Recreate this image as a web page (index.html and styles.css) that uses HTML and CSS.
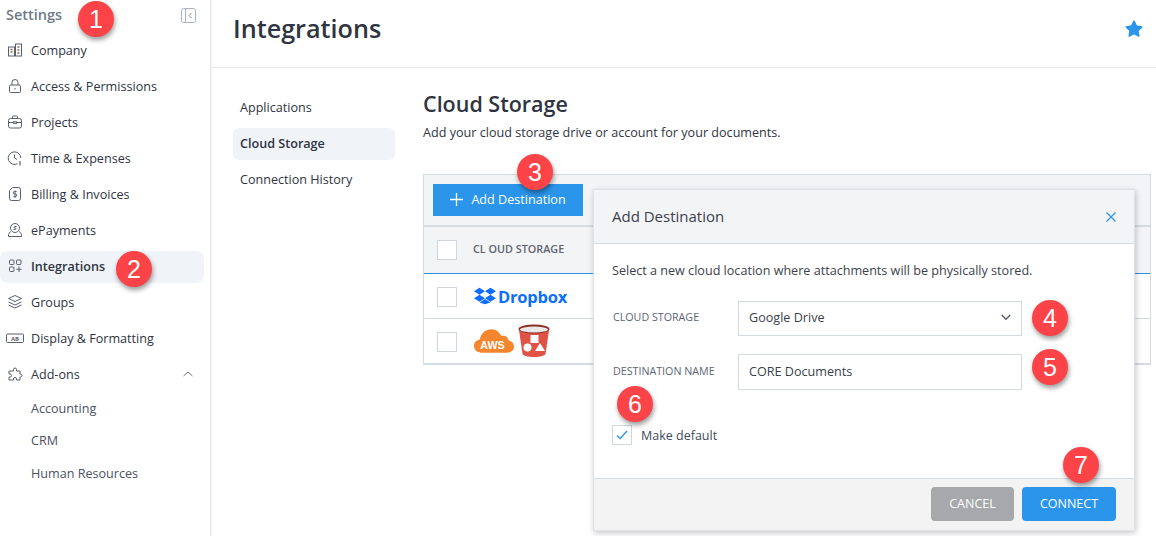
FILE: index.html
```html
<!DOCTYPE html>
<html lang="en">
<head>
<meta charset="utf-8">
<title>Integrations</title>
<link rel="stylesheet" href="styles.css">
</head>
<body>
<div class="app">
  <aside class="sidebar">
    <div class="side-head">
      <span class="side-title">Settings</span>
      <svg class="collapse" width="15" height="15" viewBox="0 0 15 15" fill="none" stroke="#a9b3c2" stroke-width="1"><rect x=".5" y=".5" width="14" height="14" rx="2"/><path d="M4.500 .5v14"/><path d="M10.500 5L8 7.500l2.500 2.500" stroke="#7d8899"/></svg>
    </div>
    <nav class="side-nav">
      <a class="nav-item"><svg class="ico" viewBox="0 0 16 16" fill="none" stroke="#5a5f6e"><rect x="1.500" y="5" width="6" height="9"/><rect x="8.500" y="2" width="6" height="12"/><path d="M3.500 7.500h2M3.500 10h2M10.500 5h2M10.500 8h2M10.500 11h2" stroke="#8a6d3b" stroke-width="1.400"/></svg><span>Company</span></a>
      <a class="nav-item"><svg class="ico" viewBox="0 0 16 16" fill="none" stroke="#5a5f6e"><rect x="2.500" y="7" width="11" height="7.500" rx="1.200"/><path d="M5 7V4.500a3 3 0 0 1 6 0V7"/><path d="M8 10v1.500"/></svg><span>Access &amp; Permissions</span></a>
      <a class="nav-item"><svg class="ico" viewBox="0 0 16 16" fill="none" stroke="#5a5f6e"><rect x="1.500" y="4.500" width="13" height="9.500" rx="2"/><path d="M5.500 4.500V3a1 1 0 0 1 1-1h3a1 1 0 0 1 1 1v1.500M1.500 8.500h4.500M10 8.500h4.500"/><rect x="6.500" y="7.800" width="3" height="1.600"/></svg><span>Projects</span></a>
      <a class="nav-item"><svg class="ico" viewBox="0 0 16 16" fill="none" stroke="#5a5f6e"><path d="M10.500 13.700A6.300 6.300 0 1 1 13.800 8"/><path d="M7.500 4.500V8l2.500 1.500"/><path d="M13 11v4.500" stroke-width="1.200"/></svg><span>Time &amp; Expenses</span></a>
      <a class="nav-item"><svg class="ico" viewBox="0 0 16 16" fill="none" stroke="#5a5f6e"><path d="M5.500 1.500h6a2 2 0 0 1 2 2v9a2 2 0 0 1-2 2h-7a2 2 0 0 1-2-2V4.500z"/><path d="M9.500 5.500H7.500a1 1 0 0 0 0 2.500h1a1 1 0 0 1 0 2.500H6.500M8 4.500v7.500"/></svg><span>Billing &amp; Invoices</span></a>
      <a class="nav-item"><svg class="ico" viewBox="0 0 16 16" fill="none" stroke="#5a5f6e"><circle cx="8" cy="6" r="4.500"/><path d="M9.500 4.500H7.500a.8.800 0 0 0 0 1.500h1a.8.800 0 0 1 0 1.500H6.500"/><path d="M3.500 9.500L1.500 12.500v2h13v-2l-2-3"/></svg><span>ePayments</span></a>
      <a class="nav-item active"><svg class="ico" viewBox="0 0 16 16" fill="none" stroke="#5a5f6e"><rect x="2.500" y="2" width="4.500" height="4.500" rx="1"/><rect x="9.500" y="2" width="4.500" height="4.500" rx="1"/><rect x="2.500" y="9" width="4.500" height="4.500" rx="1"/><path d="M12 8.500v5.500M9.300 11.300h5.400"/></svg><span>Integrations</span></a>
      <a class="nav-item"><svg class="ico" viewBox="0 0 16 16" fill="none" stroke="#5a5f6e"><path d="M8 1.500l6.500 3L8 7.500l-6.500-3z"/><path d="M1.500 8L8 11l6.500-3M1.500 11L8 14l6.500-3"/></svg><span>Groups</span></a>
      <a class="nav-item"><svg class="ico ico-wide" viewBox="0 0 18 12" fill="none" stroke="#5a5f6e"><rect x=".5" y="2" width="17" height="8.500" rx="1"/><text x="9" y="8.500" class="ab">AB</text></svg><span>Display &amp; Formatting</span></a>
      <a class="nav-item"><svg class="ico" viewBox="0 0 16 16" fill="none" stroke="#5a5f6e"><path d="M5 5h1.500V3.500a1.500 1.500 0 0 1 3 0V5H13v3h.5a1.500 1.500 0 0 1 0 3H13v3H9.500v-1a1.500 1.500 0 0 0-3 0v1H2v-3h1a1.500 1.500 0 0 0 0-3H2V5z"/></svg><span>Add-ons</span><svg class="chev-up" width="12" height="8" viewBox="0 0 12 8" fill="none" stroke="#6b7280"><path d="M1.500 6L6 2l4.500 4"/></svg></a>
      <a class="sub-item first">Accounting</a>
      <a class="sub-item">CRM</a>
      <a class="sub-item">Human Resources</a>
    </nav>
  </aside>

  <main class="main">
    <header class="top">
      <h1>Integrations</h1>
      <svg class="star" width="18" height="18" viewBox="0 0 18 18"><path d="M9 1.200l2.400 4.900 5.400.8-3.900 3.800.9 5.400L9 13.600l-4.800 2.500.9-5.400L1.200 6.900l5.400-.8z" fill="#2b95eb" stroke="#2b95eb" stroke-width="1.500" stroke-linejoin="round"/></svg>
    </header>
    <div class="body">
      <nav class="subnav">
        <a class="subnav-item">Applications</a>
        <a class="subnav-item current">Cloud Storage</a>
        <a class="subnav-item">Connection History</a>
      </nav>
      <section class="content">
        <h2>Cloud Storage</h2>
        <p class="lead">Add your cloud storage drive or account for your documents.</p>
        <div class="table">
          <div class="toolbar">
            <button class="add-btn"><svg width="13" height="13" viewBox="0 0 13 13" stroke="#fff" stroke-width="1.300"><path d="M6.500 0v13M0 6.500h13"/></svg>Add Destination</button>
          </div>
          <div class="row head"><span class="check"></span><span class="th">CL OUD STORAGE</span></div>
          <div class="row r1"><span class="check"></span>
            <span class="dropbox"><svg width="22" height="18" viewBox="0 0 25 19" fill="#0d6efd"><path d="M6.300 0L0 4l6.300 4 6.200-4zM18.700 0l-6.200 4 6.200 4L25 4zM0 12l6.300 4 6.200-4-6.200-4zM18.700 8l-6.200 4 6.200 4 6.300-4zM6.300 17l6.200 2 6.200-2-6.200-4z"/></svg><b>Dropbox</b></span>
          </div>
          <div class="row r2"><span class="check"></span>
            <span class="logos">
              <svg width="40" height="27" viewBox="0 0 41 27"><path d="M8 26C3 26 0 23 0 19c0-4 3-6 6-6.500C7 6 12 2 18 2c5 0 8 3 10 7 1-.5 3-.5 4 0 2 1 3 2.500 3.500 4.500C38.500 14 41 16.500 41 20c0 3.500-3 6-7 6z" fill="#f5862e"/><text x="19" y="22" class="aws">AWS</text></svg>
              <svg width="32" height="33" viewBox="0 0 32 33"><path d="M1 6l3.500 24c.2 1.500 5 3 11.500 3s11.300-1.500 11.500-3L31 6z" fill="#e05243"/><ellipse cx="16" cy="5" rx="15.500" ry="4.500" fill="#8c3123"/><ellipse cx="16" cy="5.500" rx="14" ry="3" fill="#e8e8e8"/><rect x="12.500" y="11" width="8" height="8" fill="#fff"/><circle cx="9.500" cy="23.500" r="4" fill="#fff"/><path d="M22 19l5 8H17z" fill="#fff"/></svg>
            </span>
          </div>
        </div>
      </section>
    </div>
  </main>
</div>

<div class="modal">
  <div class="modal-head"><span class="modal-title">Add Destination</span><svg width="10" height="10" viewBox="0 0 10 10" stroke="#2b95eb" stroke-width="1.200"><path d="M.5 .5l9 9M9.500 .5l-9 9"/></svg></div>
  <div class="modal-body">
    <p class="hint">Select a new cloud location where attachments will be physically stored.</p>
    <div class="field"><label class="lab-a">CLOUD STORAGE</label><div class="input">Google Drive<svg width="10" height="7" viewBox="0 0 10 7" fill="none" stroke="#555c68" stroke-width="1.400"><path d="M.8 1L5 5.200 9.200 1"/></svg></div></div>
    <div class="field second"><label class="lab-b">DESTINATION NAME</label><div class="input">CORE Documents</div></div>
    <div class="default"><span class="check small"><svg width="12" height="10" viewBox="0 0 12 10" fill="none" stroke="#2b95eb" stroke-width="1.400"><path d="M1 5.500L4.200 8.500 11 1"/></svg></span>Make default</div>
  </div>
  <div class="modal-foot"><button class="btn cancel">CANCEL</button><button class="btn connect">CONNECT</button></div>
</div>

<span class="badge b1">1</span>
<span class="badge b2">2</span>
<span class="badge b3">3</span>
<span class="badge b4">4</span>
<span class="badge b5">5</span>
<span class="badge b6">6</span>
<span class="badge b7">7</span>
</body>
</html>
```
FILE: styles.css
```css
* { box-sizing: border-box; }
html, body { margin: 0; height: 536px; overflow: hidden; }
body { position: relative; background: #fff; font-family: "Open Sans", sans-serif; color: #2f3442; font-size: 12.600px; }
.app { display: flex; height: 536px; }

.sidebar { width: 211px; flex: none; border-right: 1px solid #e6e8ec; box-shadow: 1px 0 2px #eef0f3; padding-right: 6px; }
.side-head { height: 35px; display: flex; align-items: flex-start; justify-content: space-between; padding: 5px 8px 0 6px; }
.side-title { font-size: 14.500px; font-weight: 600; color: #6d7a8a; line-height: 20px; }
.collapse { margin-top: 3px; }
.side-nav { display: flex; flex-direction: column; }
.nav-item { height: 32px; margin-bottom: 4px; display: flex; align-items: center; padding: 0 10px 2px 7px; border-radius: 8px; color: #2f3442; }
.nav-item.active { background: #f0f3f8; font-weight: 600; }
.ico { width: 16px; height: 16px; flex: none; margin-right: 8px; stroke-width: 1; }
.ico-wide { width: 18px; height: 12px; margin-left: -1px; margin-right: 7px; }
.ab { font: 700 6px "Open Sans", sans-serif; fill: #5a5f6e; stroke: none; text-anchor: middle; }
.chev-up { margin-left: auto; }
.sub-item { height: 32.500px; display: flex; align-items: center; padding-left: 31px; color: #4a5263; }
.sub-item.first { margin-top: -3px; }

.main { flex: 1; min-width: 0; }
.top { height: 68px; border-bottom: 1px solid #e6e8ec; display: flex; align-items: center; justify-content: space-between; padding: 0 13px 10px 22px; }
h1 { margin: -2px 0 0; font-size: 25.200px; font-weight: 600; color: #2f3442; line-height: 36px; }
.body { display: flex; padding: 0 5px 0 22px; }
.subnav { width: 162px; flex: none; margin-right: 28px; padding-top: 24px; display: flex; flex-direction: column; gap: 4px; }
.subnav-item { height: 32px; line-height: 31px; padding-left: 7px; border-radius: 6px; color: #2f3442; }
.subnav-item.current { background: #f0f3f8; font-weight: 600; }
.content { flex: 1; min-width: 0; padding-top: 21px; }
h2 { margin: 0; font-size: 21.500px; font-weight: 600; line-height: 30px; color: #2f3442; }
.lead { margin: 5px 0 0; line-height: 18px; }

.table { margin-top: 32px; border: 1px solid #d5dbe3; border-bottom-width: 2px; background: #fff; }
.toolbar { height: 52px; background: #f3f4f6; padding: 9px 9px 0; border-bottom: 2px solid #d5dae1; }
.add-btn { width: 150px; height: 32px; background: #2b95eb; border: 0; color: #fff; font: 12.600px "Open Sans", sans-serif; display: flex; align-items: center; justify-content: center; gap: 8px; padding: 0 0 2px; }
.row { display: flex; align-items: center; padding-left: 13px; }
.row.head { height: 47px; background: #f3f4f6; border-bottom: 1px solid #2b8fe0; }
.r1 { height: 45px; border-bottom: 1px solid #d5dbe3; padding-top: 2px; }
.r2 { height: 44px; padding-top: 2px; }
.check { width: 20px; height: 20px; border: 1px solid #d0d6de; background: #fff; flex: none; margin-right: 16px; display: flex; align-items: center; justify-content: center; }
.th { font-size: 10.800px; font-weight: 600; color: #5f6470; margin-bottom: 4px; }
.dropbox { display: flex; align-items: center; gap: 2px; color: #0d6efd; margin: -2px 0 0 1px; }
.dropbox b { font: 700 16.500px "Open Sans", sans-serif; letter-spacing: -.2px; }
.logos { display: flex; align-items: center; gap: 4px; margin: -4px 0 0 1px; }
.aws { font: 700 11px "Liberation Sans", sans-serif; fill: #fff; text-anchor: middle; }

.modal { position: absolute; left: 593px; top: 189px; width: 542px; height: 342px; background: #fff; border: 1px solid #dfe2e7; box-shadow: 1px 2px 6px rgba(0,0,0,.22); display: flex; flex-direction: column; }
.modal-head { height: 54px; flex: none; background: #f3f4f6; border-bottom: 1px solid #d5dae1; display: flex; align-items: center; justify-content: space-between; padding: 0 18px; font-size: 15px; color: #3b3f4c; }
.modal-title { margin-bottom: 2px; }
.modal-body { flex: 1; padding: 18px 18px 0; }
.hint { margin: 0; font-size: 12.600px; line-height: 18px; color: #3b3f4c; }
.field { display: flex; align-items: center; margin-top: 21px; }
.field.second { margin-top: 18px; }
.field label { width: 126px; flex: none; font-size: 10.700px; color: #5d6573; padding-left: 1px; }
.lab-a { margin-bottom: 3px; }
.lab-b { margin-bottom: 2px; }
.input { width: 284px; height: 35px; border: 1px solid #d5dbe3; padding: 0 10px 2px; display: flex; align-items: center; justify-content: space-between; font-size: 12.600px; color: #3b3f4c; }
.second .input { height: 36px; }
.default { display: flex; align-items: center; margin-top: 35px; font-size: 12.500px; color: #3f4a5a; }
.check.small { margin-right: 9px; }
.modal-foot { height: 52px; flex: none; background: #f3f3f4; border-top: 1px solid #d5dbe3; display: flex; align-items: center; justify-content: flex-end; gap: 8px; padding: 0 18px 2px 0; }
.btn { height: 34px; border: 0; border-radius: 4px; color: #fff; font: 12.500px "Open Sans", sans-serif; padding: 0; }
.cancel { width: 83px; background: #a6a8ac; }
.connect { width: 94px; background: #2b95eb; }

.badge { position: absolute; width: 36px; height: 36px; border-radius: 50%; background: #fb4348; color: #fff; font: 25px/36px "Liberation Sans", sans-serif; text-align: center; box-shadow: 1px 3px 5px rgba(0,0,0,.4); }
.b1 { left: 78px; top: 1px; }
.b2 { left: 116px; top: 251px; }
.b3 { left: 517px; top: 154px; }
.b4 { left: 1032px; top: 300px; }
.b5 { left: 1032px; top: 349px; }
.b6 { left: 617px; top: 386px; }
.b7 { left: 1063px; top: 447px; }
```
